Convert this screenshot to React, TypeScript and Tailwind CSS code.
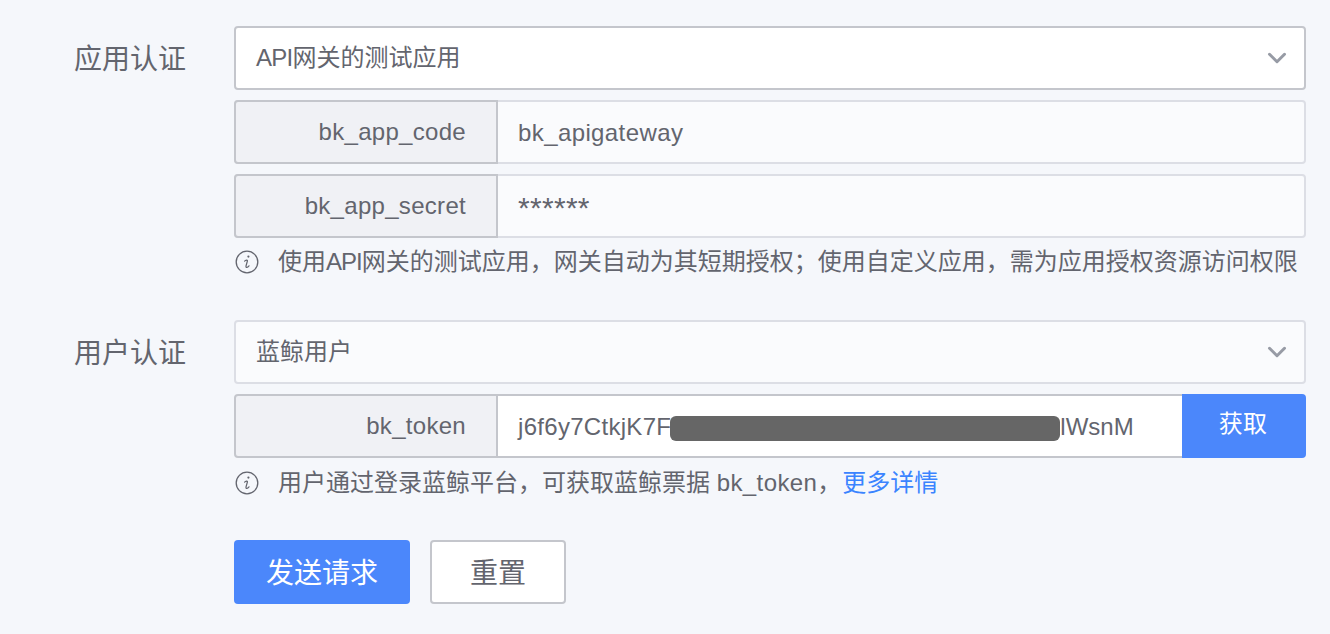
import { ChevronDown } from 'lucide-react'

const fontStack = "font-['Liberation_Sans','Noto_Sans_CJK_SC',sans-serif]"

function InfoIcon() {
  return (
    <svg width="24" height="24" viewBox="0 0 24 24" fill="none" className="shrink-0 text-[#63656e]">
      <circle cx="12" cy="12" r="10.8" stroke="currentColor" strokeWidth="1.3" />
      <circle cx="13.4" cy="6.6" r="1.1" fill="currentColor" />
      <path
        d="M9.6 11.2 C10.6 10.2 12.6 9.6 12.4 11 L11 16 C10.6 18 12.6 17.6 14 15.8"
        stroke="currentColor"
        strokeWidth="1.2"
        strokeLinecap="round"
        strokeLinejoin="round"
      />
    </svg>
  )
}

function SelectBox({ children, active }: { children: React.ReactNode; active?: boolean }) {
  return (
    <div
      className={`flex h-[64px] items-center justify-between rounded-[4px] border-2 pl-[20px] pr-[12px] text-[24px] text-[#63656e] ${
        active ? 'border-[#c4c6cc] bg-white' : 'border-[#dcdee5] bg-[#fafbfd]'
      }`}
    >
      <span>{children}</span>
      <ChevronDown className="h-[30px] w-[30px] text-[#979ba5]" strokeWidth={2.4} />
    </div>
  )
}

function ParamRow({ name, value, masked }: { name: string; value: string; masked?: boolean }) {
  return (
    <div className="flex h-[64px] rounded-[4px] border-2 border-[#dcdee5] bg-[#fafbfd] text-[24px] tracking-[0.3px] text-[#63656e]">
      <div className="-m-[2px] flex w-[264px] shrink-0 items-center justify-end rounded-l-[4px] border-2 border-[#c4c6cc] bg-[#f0f1f5] pr-[30px]">
        {name}
      </div>
      <div
        className={`flex flex-1 items-center pl-[22px] ${
          masked ? 'pt-[3px] text-[30px] tracking-[0.3px]' : 'pt-[2px] tracking-[0.4px]'
        }`}
      >
        {value}
      </div>
    </div>
  )
}

function Hint({ children }: { children: React.ReactNode }) {
  return (
    <div className="flex h-[48px] items-center gap-[19px] whitespace-nowrap pl-[1px] text-[24px] text-[#63656e]">
      <InfoIcon />
      <span>{children}</span>
    </div>
  )
}

function FormRow({ label, children }: { label: string; children: React.ReactNode }) {
  return (
    <div className="flex">
      <div className="flex h-[64px] w-[234px] shrink-0 items-center pl-[74px] pt-[3px] text-[28px] text-[#63656e]">{label}</div>
      <div className="flex w-[1072px] flex-col gap-[10px]">{children}</div>
    </div>
  )
}

export default function App() {
  return (
    <div className={`h-[634px] w-[1330px] overflow-hidden bg-[#f5f7fb] pt-[26px] ${fontStack}`}>
      <FormRow label="应用认证">
        <SelectBox active>
          <span className="tracking-[-0.7px]">API</span>网关的测试应用
        </SelectBox>
        <ParamRow name="bk_app_code" value="bk_apigateway" />
        <div>
          <ParamRow name="bk_app_secret" value="******" masked />
          <Hint>
            使用<span className="tracking-[-1px]">API</span>网关的测试应用，网关自动为其短期授权；使用自定义应用，需为应用授权资源访问权限
          </Hint>
        </div>
      </FormRow>

      <div className="mt-[34px]">
        <FormRow label="用户认证">
          <SelectBox>蓝鲸用户</SelectBox>
          <div>
            <div className="flex h-[64px] text-[24px] tracking-[0.3px] text-[#63656e]">
              <div className="flex w-[264px] shrink-0 items-center justify-end rounded-l-[4px] border-2 border-[#c4c6cc] bg-[#f0f1f5] pr-[30px]">
                bk_token
              </div>
              <div className="relative flex flex-1 items-center border-y-2 border-[#c4c6cc] bg-white pl-[20px] pt-[2px]">
                j6f6y7CtkjK7F
                <span className="ml-[389px] tracking-normal">lWsnM</span>
                <div className="absolute left-[172px] top-[20px] h-[25px] w-[390px] rounded-[6px] bg-[#666666]" />
              </div>
              <button className="w-[124px] shrink-0 rounded-r-[4px] bg-[#4b87fb] pb-[5px] pr-[2px] text-[24px] text-white">获取</button>
            </div>
            <div className="mt-[1px]">
              <Hint>
                用户通过登录蓝鲸平台，可获取蓝鲸票据 <span className="tracking-[0.4px]">bk_token</span>，
                <span className="ml-[1px] text-[#3a84ff]">更多详情</span>
              </Hint>
            </div>
          </div>
        </FormRow>
      </div>

      <div className="ml-[234px] mt-[33px] flex gap-[20px]">
        <button className="h-[64px] w-[176px] rounded-[4px] bg-[#4b87fb] pt-[3px] text-[28px] text-white">发送请求</button>
        <button className="h-[64px] w-[136px] rounded-[4px] border-2 border-[#c4c6cc] bg-white pt-[3px] text-[28px] text-[#63656e]">重置</button>
      </div>
    </div>
  )
}
